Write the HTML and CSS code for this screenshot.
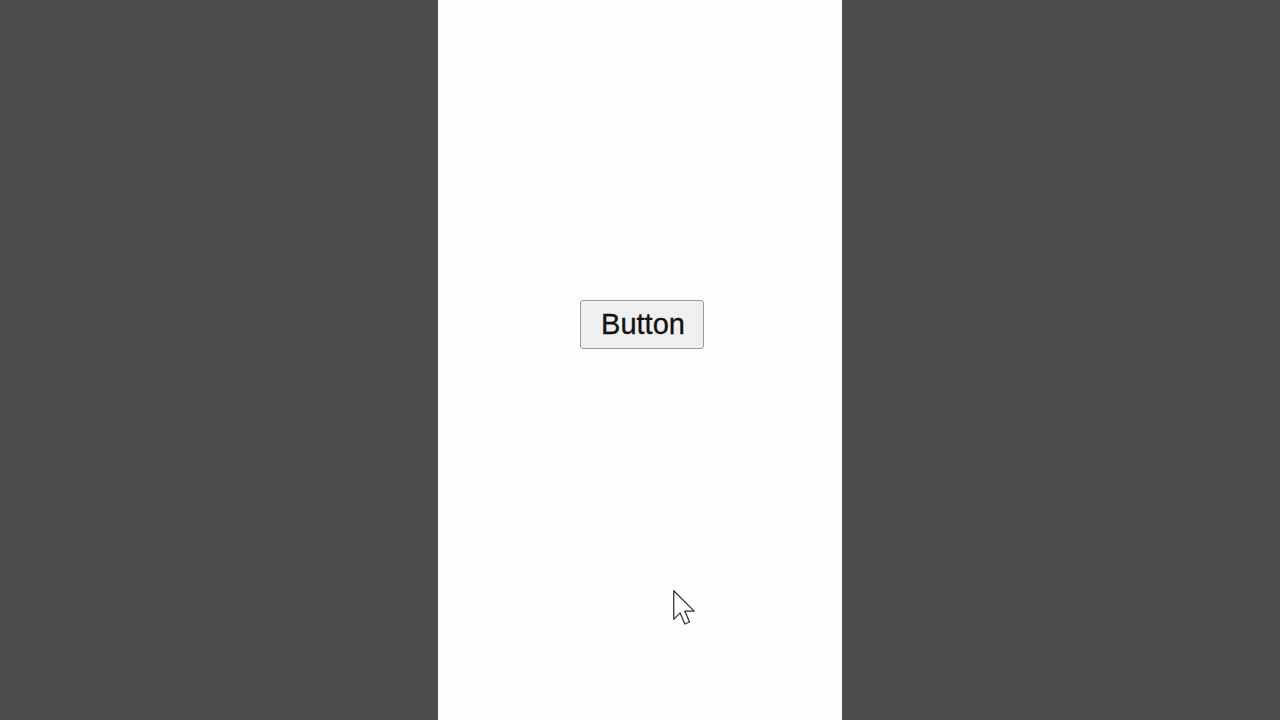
FILE: index.html
```html
<!DOCTYPE html>
<html>
<head>
<meta charset="utf-8">
<link rel="stylesheet" href="styles.css">
</head>
<body>
<div class="stage">
  <div class="phone">
    <button class="btn">Button</button>
    <svg class="cursor" width="28" height="42" viewBox="0 0 24 36">
      <path d="M1.5 1.5 L1.5 26 L7 20.5 L11 30 L15 28.3 L11 19 L19 19 Z" fill="#fff" stroke="#333" stroke-width="1.1" stroke-linejoin="round"/>
    </svg>
  </div>
</div>
</body>
</html>
```
FILE: styles.css
```css
html, body { margin: 0; padding: 0; }
body { background: #4d4d4d; font-family: "Liberation Sans", Arial, sans-serif; }
.stage { width: 1280px; height: 720px; display: flex; justify-content: center; }
.phone {
  width: 404px; height: 720px; background: #fefefe;
  position: relative;
  display: flex; flex-direction: column; align-items: center;
}
.btn {
  margin-top: 300px; margin-left: 4px;
  width: 124px; height: 49px;
  font-family: "Liberation Sans", Arial, sans-serif; font-size: 29px; color: #111;
  background: #efefef; border: 1.5px solid #9a9a9a; border-radius: 3px;
  padding: 0 0 0 2px; box-sizing: border-box;
  -webkit-text-stroke: 0.3px #111;
}
.cursor { position: absolute; left: 234px; top: 589px; }
```
